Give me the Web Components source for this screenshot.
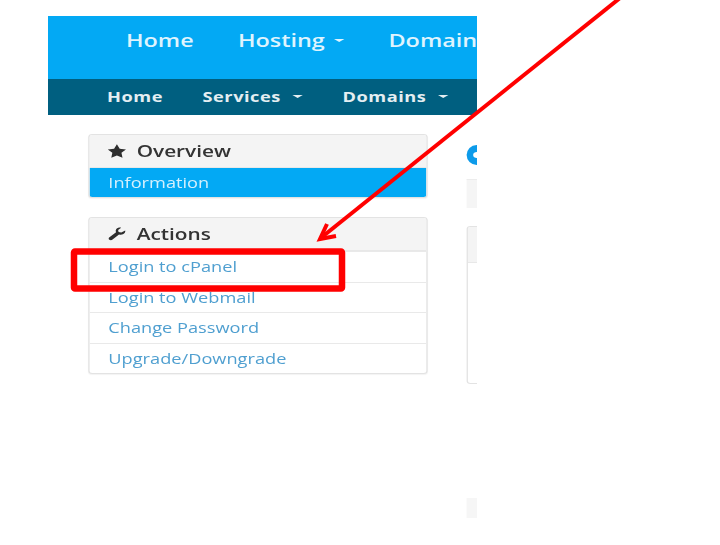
<!DOCTYPE html>
<html>
<head>
<meta charset="utf-8">
<title>Client area</title>
<style>
  html, body { margin: 0; background: #fff; }
  body { font-family: "Open Sans", "Liberation Sans", sans-serif; width: 720px; height: 545px; overflow: hidden; position: relative; }
</style>
</head>
<body>
<template id="nav-item-tpl">
  <style>
    :host { display: inline-flex; align-items: center; color: var(--nav-color, #d9f1fd); white-space: nowrap; }
    .caret { display: none; width: 0; height: 0; border-left: 4px solid transparent; border-right: 4px solid transparent; border-top: 3px solid currentColor; margin-left: var(--caret-gap, 7px); }
    :host([caret]) .caret { display: block; }
  </style>
  <slot></slot><span class="caret"></span>
</template>

<script>
  const tpl = (html) => {
    const t = document.createElement('template');
    t.innerHTML = html;
    return t;
  };

  class NavItem extends HTMLElement {
    connectedCallback() {
      if (this.shadowRoot) return;
      this.attachShadow({ mode: 'open' }).appendChild(document.getElementById('nav-item-tpl').content.cloneNode(true));
    }
  }

  const siteNavTpl = tpl(`
    <style>
      :host { display: flex; flex-direction: column; overflow: hidden; }
      .top { height: 63px; background: #03a9f4; display: flex; align-items: center; padding: 0 0 15px 60px; box-sizing: border-box; gap: 34px; font-size: 18px; font-weight: 600; --nav-color: #dff4fe; --caret-gap: 7px; }
      .sub { height: 36px; background: #005f80; display: flex; align-items: center; padding: 0 0 1px 45.4px; box-sizing: border-box; gap: 30.5px; font-size: 14px; font-weight: 700; letter-spacing: .4px; --nav-color: #e4eef2; --caret-gap: 9px; }
    </style>
    <div class="top"><slot name="top"></slot></div>
    <div class="sub"><slot name="sub"></slot></div>
  `);
  class SiteNav extends HTMLElement {
    connectedCallback() {
      if (this.shadowRoot) return;
      this.attachShadow({ mode: 'open' }).appendChild(siteNavTpl.content.cloneNode(true));
    }
  }

  const sidePanelTpl = tpl(`
    <style>
      :host { display: block; border: 1px solid #e3e3e3; border-radius: 3px; overflow: hidden; background: #fff; box-shadow: 0 1px 1px rgba(0,0,0,.05); }
      .head { height: 32px; background: #f4f4f4; display: flex; align-items: center; gap: 8.4px; padding-left: 14px; font-size: 16px; font-weight: 600; color: #333; border-bottom: 1px solid #e8e8e8; }
      ::slotted(svg) { width: 14px; height: 14px; fill: #2e2e2e; flex: none; }
    </style>
    <div class="head"><slot name="icon"></slot><span class="title"></span></div>
    <slot></slot>
  `);
  class SidePanel extends HTMLElement {
    connectedCallback() {
      if (this.shadowRoot) return;
      this.attachShadow({ mode: 'open' }).appendChild(sidePanelTpl.content.cloneNode(true));
      this.shadowRoot.querySelector('.title').textContent = this.getAttribute('heading');
    }
  }

  const sideLinkTpl = tpl(`
    <style>
      :host { display: flex; align-items: center; height: 29.5px; padding-left: 14.6px; font-size: 14px; color: #4f9fd0; border-top: 1px solid #e9e9e9; }
      :host([active]) { background: #03a9f4; color: #d5f0fd; height: 29px; border-top: 0; }
    </style>
    <slot></slot>
  `);
  class SideLink extends HTMLElement {
    connectedCallback() {
      if (this.shadowRoot) return;
      this.attachShadow({ mode: 'open' }).appendChild(sideLinkTpl.content.cloneNode(true));
    }
  }

  const mainStubTpl = tpl(`
    <style>
      :host { display: block; width: 46px; flex: none; }
      .title { height: 20px; margin-top: 11px; }
      .dot { display: block; width: 15.4px; height: 20px; border-radius: 50%; background: radial-gradient(circle at center, #fff 0 2.5px, #0d9bea 3.5px); }
      .well { height: 29px; margin-top: 14px; background: #f5f5f5; border-top: 1px solid #ececec; box-sizing: border-box; }
      .box { height: 158px; margin-top: 18px; border: 1px solid #e3e3e3; border-radius: 3px; overflow: hidden; box-sizing: border-box; }
      .box div { height: 35px; background: #f4f4f4; border-bottom: 1px solid #e8e8e8; }
      .foot { height: 20px; margin-top: 114px; background: #f6f6f6; }
    </style>
    <div class="title"><span class="dot"></span></div>
    <div class="well"></div>
    <div class="box"><div></div></div>
    <div class="foot"></div>
  `);
  class MainStub extends HTMLElement {
    connectedCallback() {
      if (this.shadowRoot) return;
      this.attachShadow({ mode: 'open' }).appendChild(mainStubTpl.content.cloneNode(true));
    }
  }

  // the source shot is stretched sideways, so the whole frame is too
  const pageFrameTpl = tpl(`
    <style>
      :host { display: block; width: 330px; height: 502px; margin: 16px 0 0 48px; overflow: hidden; transform: scaleX(1.3); transform-origin: 0 0; filter: blur(.45px); }
      .cols { display: flex; gap: 30px; padding: 19px 0 0 30.8px; }
      .side { width: 261.5px; flex: none; display: flex; flex-direction: column; gap: 19px; }
    </style>
    <slot name="nav"></slot>
    <div class="cols">
      <div class="side"><slot name="side"></slot></div>
      <main-stub></main-stub>
    </div>
  `);
  class PageFrame extends HTMLElement {
    connectedCallback() {
      if (this.shadowRoot) return;
      this.attachShadow({ mode: 'open' }).appendChild(pageFrameTpl.content.cloneNode(true));
    }
  }

  // the red markup drawn over the screenshot
  const markupTpl = tpl(`
    <style>
      :host { position: absolute; inset: 0; pointer-events: none; filter: blur(.35px); }
      svg { display: block; }
    </style>
    <svg width="720" height="545" viewBox="0 0 720 545" fill="none" stroke="#f00">
      <rect x="74" y="251.500" width="268" height="37" rx="1" stroke-width="6.500"/>
      <path d="M620 -2 L322 237" stroke-width="4"/>
      <path d="M327 224 L320 239 L336 236" stroke-width="4" stroke-linejoin="miter"/>
    </svg>
  `);
  class RedMarkup extends HTMLElement {
    connectedCallback() {
      if (this.shadowRoot) return;
      this.attachShadow({ mode: 'open' }).appendChild(markupTpl.content.cloneNode(true));
    }
  }

  customElements.define('nav-item', NavItem);
  customElements.define('site-nav', SiteNav);
  customElements.define('side-panel', SidePanel);
  customElements.define('side-link', SideLink);
  customElements.define('main-stub', MainStub);
  customElements.define('page-frame', PageFrame);
  customElements.define('red-markup', RedMarkup);
</script>

<page-frame>
  <site-nav slot="nav">
    <nav-item slot="top">Home</nav-item>
    <nav-item slot="top" caret>Hosting</nav-item>
    <nav-item slot="top">Domain</nav-item>
    <nav-item slot="sub">Home</nav-item>
    <nav-item slot="sub" caret>Services</nav-item>
    <nav-item slot="sub" caret>Domains</nav-item>
  </site-nav>
  <side-panel slot="side" heading="Overview">
    <svg slot="icon" viewBox="0 0 24 23"><path d="M12 0l3.700 7.600 8.300 1.200-6 5.900 1.400 8.300L12 19.100l-7.400 3.900L6 14.700 0 8.800l8.300-1.200z"/></svg>
    <side-link active>Information</side-link>
  </side-panel>
  <side-panel slot="side" heading="Actions">
    <svg slot="icon" viewBox="0 0 24 22"><path d="M23 5.200c.3 2.700-.7 5-3 6.300-1.700.9-3.500 1-5.200.2L6.300 20.500c-1.300 1.300-3.200 1.300-4.300.2-1.200-1.200-1.100-3 .2-4.300l8.700-8.600C10.200 6 10.300 4.200 11.300 2.600 12.700.5 15-.4 17.600.2l-4 3.800.6 3.700 3.600.7z"/></svg>
    <side-link>Login to cPanel</side-link>
    <side-link>Login to Webmail</side-link>
    <side-link>Change Password</side-link>
    <side-link>Upgrade/Downgrade</side-link>
  </side-panel>
</page-frame>
<red-markup></red-markup>
</body>
</html>
